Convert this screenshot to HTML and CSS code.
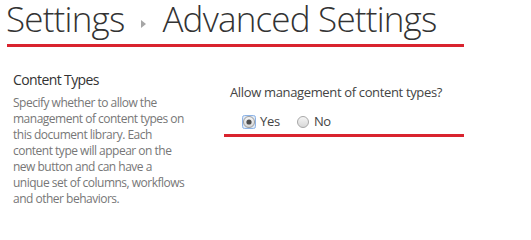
FILE: index.html
```html
<!DOCTYPE html>
<html>
<head>
<meta charset="utf-8">
<link rel="stylesheet" href="styles.css">
</head>
<body>
<div class="page">
  <h1 class="title"><span class="crumb">Settings</span><span class="sep"><svg width="5" height="8" viewBox="0 0 5 8"><path d="M0 0 L5 4 L0 8 Z" fill="#a6a6a6"/></svg></span><span class="crumb">Advanced Settings</span></h1>
  <div class="mark mark-title"></div>
  <div class="section">
    <div class="desc-col">
      <h3 class="sec-title">Content Types</h3>
      <p class="sec-desc">Specify whether to allow the<br>management of content types on<br>this document library. Each<br>content type will appear on the<br>new button and can have a<br>unique set of columns, workflows<br>and other behaviors.</p>
    </div>
    <div class="ctrl-col">
      <div class="question">Allow management of content types?</div>
      <div class="radios">
        <label class="radio radio-yes"><svg class="radio-icon" width="16" height="16" viewBox="0 0 16 16"><defs><linearGradient id="rg" x1="0" y1="0" x2="0" y2="1"><stop offset="0" stop-color="#f6f6f6"/><stop offset="1" stop-color="#d6d6d6"/></linearGradient></defs><rect x="1.5" y="1.5" width="13" height="13" rx="2" fill="#dde8f6" stroke="#8db3e6"/><circle cx="8" cy="8" r="5.5" fill="url(#rg)" stroke="#9c9c9c"/><circle cx="8" cy="8" r="2.6" fill="#4d4d4d"/></svg><span class="radio-text">Yes</span></label>
        <label class="radio"><svg class="radio-icon" width="16" height="16" viewBox="0 0 16 16"><defs><linearGradient id="rg2" x1="0" y1="0" x2="0" y2="1"><stop offset="0" stop-color="#f6f6f6"/><stop offset="1" stop-color="#d6d6d6"/></linearGradient></defs><circle cx="8" cy="8" r="5.5" fill="url(#rg2)" stroke="#a8a8a8"/></svg><span class="radio-text">No</span></label>
      </div>
      <div class="mark mark-ctrl"></div>
    </div>
  </div>
</div>
</body>
</html>
```
FILE: styles.css
```css
html, body { margin: 0; padding: 0; background: #fff; }
body { font-family: "Open Sans", "Noto Sans", sans-serif; width: 531px; height: 217px; overflow: hidden; }
.title { margin: 0; padding-left: 6px; height: 38px; font-weight: 300; font-size: 35px; color: #333; line-height: 38px; display: flex; align-items: flex-start; letter-spacing: -0.8px; white-space: nowrap; }
.crumb { display: block; }
.sep { display: flex; align-self: flex-start; padding: 20px 16px 0 17px; height: 8px; }
.sep svg { display: block; }
.mark { background: #d9232e; height: 3px; }
.mark-title { margin: 6px 0 0 7px; width: 457px; }
.section { display: flex; padding-top: 24px; }
.desc-col { width: 211px; padding-left: 13px; }
.sec-title { margin: 0; font-size: 14px; font-weight: 400; color: #333; line-height: 18px; letter-spacing: -0.6px; }
.sec-desc { margin: 6px 0 0 0; font-size: 12px; line-height: 16px; color: #777; letter-spacing: -0.5px; white-space: nowrap; }
.ctrl-col { width: 240px; padding-top: 12px; }
.question { font-size: 13px; color: #444; padding-left: 6px; line-height: 18px; letter-spacing: -0.35px; }
.radios { display: flex; align-items: flex-start; padding-left: 17px; margin-top: 11px; height: 18px; font-size: 13px; line-height: 18px; color: #444; letter-spacing: -0.3px; }
.radio { display: flex; align-items: flex-start; }
.radio-yes { margin-right: 15px; }
.radio-icon { display: block; margin-top: 2px; margin-right: 3px; }
.mark-ctrl { margin-top: 4px; width: 240px; }
```
